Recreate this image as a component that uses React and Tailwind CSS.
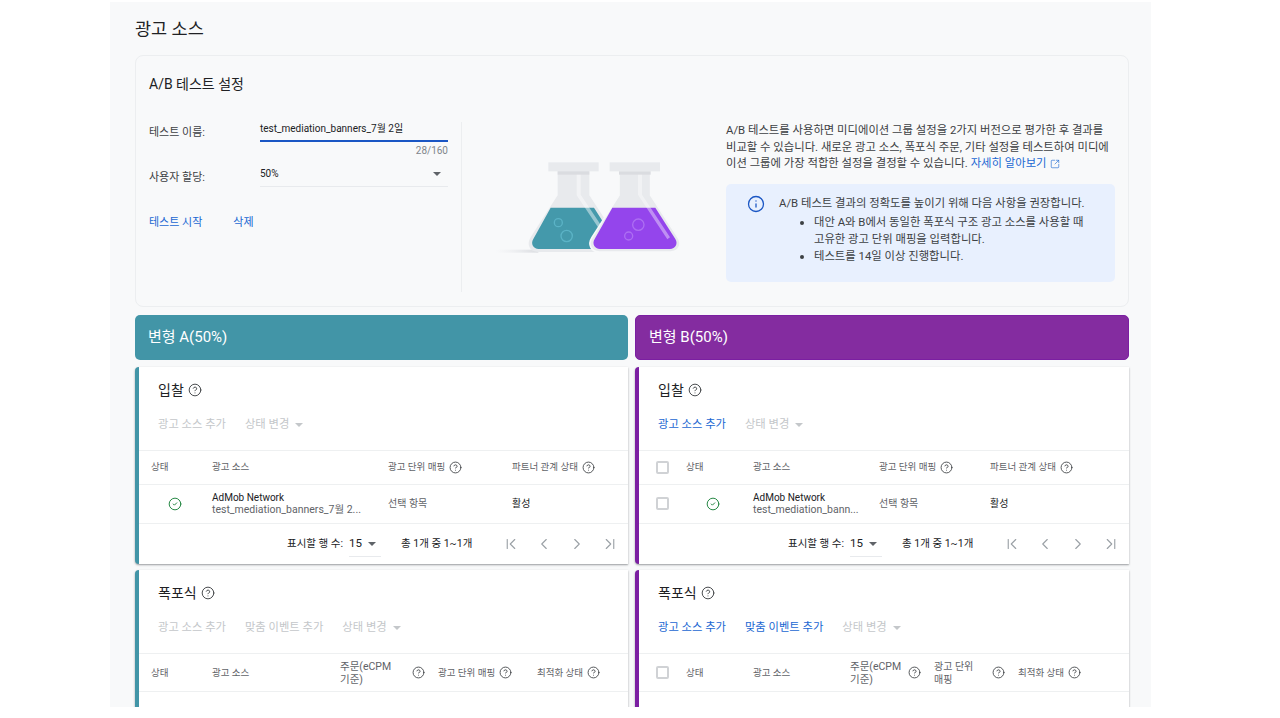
import React from 'react';
import {
  CircleHelp,
  CircleCheck,
  ChevronFirst,
  ChevronLeft,
  ChevronRight,
  ChevronLast,
  Info,
  SquareArrowOutUpRight,
} from 'lucide-react';

const Caret = ({ className = 'text-[#5f6368]' }) => (
  <svg width="8" height="4" viewBox="0 0 8 4" className={className}>
    <path d="M0 0h8L4 4z" fill="currentColor" />
  </svg>
);

const Help = ({ size = 13 }) => <CircleHelp size={size} strokeWidth={1.6} className="shrink-0 text-[#3c4043]" />;

const Checkbox = () => <div className="w-[13px] h-[13px] shrink-0 rounded-[2px] border-2 border-[#d0d2d5] bg-white" />;

const Flasks = () => (
  <svg width="200" height="105" viewBox="90 135 600 315">
    <defs>
      <linearGradient id="floor" x1="0" x2="1" y1="0" y2="0">
        <stop offset="0" stopColor="#e8eaed" stopOpacity="0" />
        <stop offset="1" stopColor="#dadce0" />
      </linearGradient>
    </defs>
    <rect x="105" y="419" width="130" height="9" fill="url(#floor)" />
    {/* teal flask */}
    <path d="M293 184h95v72l82 126c14 22 2 44-22 44H234c-24 0-36-22-22-44l81-126z" fill="#e8eaed" />
    <rect x="265" y="157" width="151" height="27" fill="#e8eaed" />
    <rect x="293" y="184" width="95" height="10" fill="#dadce0" />
    <path d="M272 293h130l60 94c9 14 0 30-16 30H236c-16 0-25-16-16-30z" fill="#4499ab" />
    <circle cx="295" cy="338" r="12" fill="none" stroke="#5bb3c6" strokeWidth="4" />
    <circle cx="320" cy="378" r="17" fill="none" stroke="#5bb3c6" strokeWidth="4" />
    <path d="M350 194h12v60l60 90-8 8-64-96z" fill="#ffffff" fillOpacity="0.45" />
    {/* purple flask */}
    <path d="M477 184h95v72l82 126c14 22 2 44-22 44H418c-24 0-36-22-22-44l81-126z" fill="#e8eaed" stroke="#f8f9fa" strokeWidth="5" />
    <rect x="449" y="157" width="151" height="27" fill="#e8eaed" />
    <rect x="477" y="184" width="95" height="10" fill="#dadce0" />
    <path d="M457 293h129l60 94c9 14 0 30-16 30H420c-16 0-25-16-16-30z" fill="#9445ec" />
    <circle cx="535" cy="344" r="17" fill="none" stroke="#ad6ff2" strokeWidth="4" />
    <circle cx="506" cy="378" r="12" fill="none" stroke="#ad6ff2" strokeWidth="4" />
    <path d="M534 194h12v60l84 128-8 6-88-134z" fill="#ffffff" fillOpacity="0.4" />
  </svg>
);

const Pager = () => (
  <div className="h-[40px] flex items-center justify-end pr-[9px] text-[#202124]">
    <span className="w-[62px] text-[10.5px]">표시할 행 수:</span>
    <div className="relative flex items-center w-[32px] self-stretch">
      <span className="text-[11.5px]">15</span>
      <span className="ml-[6px] flex"><Caret /></span>
      <div className="absolute left-0 right-0 bottom-[7px] h-px bg-[#e8eaed]" />
    </div>
    <span className="ml-[20px] w-[93px] text-[10.5px]">총 1개 중 1~1개</span>
    <div className="flex items-center gap-[15px] text-[#9aa0a6] ml-[8px]">
      <ChevronFirst size={18} strokeWidth={1.5} />
      <ChevronLeft size={18} strokeWidth={1.5} />
      <ChevronRight size={18} strokeWidth={1.5} />
      <ChevronLast size={18} strokeWidth={1.5} />
    </div>
  </div>
);

const Toolbar = ({ enabled, items }) => (
  <div className="flex items-center gap-[19px] h-[20px] mt-[16px] text-[11.3px]">
    {items.map((item) => (
      <span key={item} className={enabled ? 'text-[#1a67d2]' : 'text-[#c4c7ca]'}>{item}</span>
    ))}
    <span className="flex items-center gap-[6px] text-[#c4c7ca]">
      상태 변경
      <Caret className="text-[#c4c7ca]" />
    </span>
  </div>
);

const BidTable = ({ variantB }) => {
  const cols = variantB ? ['w-[67px]', 'w-[126px]', 'w-[111px]'] : ['w-[61px]', 'w-[176px]', 'w-[124px]'];
  return (
    <>
      <div className="h-[35px] flex items-center border-t border-b border-[#eef0f1] text-[9.5px] text-[#5f6368] pl-[12px]">
        {variantB && <div className="w-[35px] pl-[5px]"><Checkbox /></div>}
        <div className={cols[0]}>상태</div>
        <div className={cols[1]}>광고 소스</div>
        <div className={`${cols[2]} flex items-center gap-[4px]`}>광고 단위 매핑 <Help /></div>
        <div className="flex items-center gap-[4px]">파트너 관계 상태 <Help /></div>
      </div>
      <div className="h-[39px] flex items-center border-b border-[#eef0f1] text-[10px] pl-[12px] pb-[1px]">
        {variantB && <div className="w-[35px] pl-[5px]"><Checkbox /></div>}
        <div className={cols[0]}>
          <CircleCheck size={14} strokeWidth={1.6} className={`text-[#188038] ${variantB ? 'ml-[20px]' : 'ml-[17px]'}`} />
        </div>
        <div className={`${cols[1]} leading-[12px]`}>
          <div className="text-[#202124]">AdMob Network</div>
          <div className="text-[#5f6368] text-[10.5px]">{variantB ? 'test_mediation_bann...' : 'test_mediation_banners_7월 2...'}</div>
        </div>
        <div className={`${cols[2]} text-[#5f6368]`}>선택 항목</div>
        <div className="text-[#202124]">활성</div>
      </div>
      <Pager />
    </>
  );
};

const WaterfallHeader = ({ variantB }) => (
  <div className="h-[39px] flex items-center border-t border-b border-[#eef0f1] text-[9.5px] text-[#5f6368] pl-[12px] leading-[13px]">
    {variantB && <div className="w-[35px] pl-[5px]"><Checkbox /></div>}
    <div className={variantB ? 'w-[67px]' : 'w-[61px]'}>상태</div>
    <div className={variantB ? 'w-[97px]' : 'w-[128px]'}>광고 소스</div>
    <div className={`${variantB ? 'w-[84px]' : 'w-[98px]'} flex items-center`}>
      <span className={`${variantB ? 'w-[52px] mr-[6px]' : 'w-[57px] mr-[15px]'} shrink-0 text-[10.5px]`}>주문(eCPM 기준)</span>
      <Help />
    </div>
    {variantB ? (
      <div className="w-[84px] flex items-center">
        <span className="w-[44px] shrink-0 mr-[14px] text-[10px]">광고 단위 매핑</span>
        <Help />
      </div>
    ) : (
      <div className="w-[99px] flex items-center gap-[4px]">광고 단위 매핑 <Help /></div>
    )}
    <div className="flex items-center gap-[4px]">최적화 상태 <Help /></div>
  </div>
);

const SectionCard = ({ title, accent, children, toolbar }) => (
  <div className={`bg-white rounded-l-[4px] border-l-4 ${accent} shadow-[0_1px_2px_rgba(60,64,67,0.5)] overflow-hidden`}>
    <div className="pl-[19px] pt-[14px] h-[83px]">
      <div className="flex items-center gap-[4px] h-[18px] text-[14px] text-[#202124]">
        {title} <Help size={14} />
      </div>
      {toolbar}
    </div>
    {children}
  </div>
);

const VariantColumn = ({ name, variantB }) => {
  const accent = variantB ? 'border-[#7b1fa2]' : 'border-[#4295a7]';
  return (
    <div className="flex flex-col">
      <div className={`h-[45px] flex items-center pl-[13px] rounded-[5px] text-[15px] text-white ${variantB ? 'bg-[#842ca0] border border-[#7b1fa2]' : 'bg-[#4295a7]'}`}>
        {name}
      </div>
      <div className="mt-[7px]">
        <SectionCard title="입찰" accent={accent} toolbar={<Toolbar enabled={variantB} items={['광고 소스 추가']} />}>
          <BidTable variantB={variantB} />
        </SectionCard>
      </div>
      <div className="mt-[6px]">
        <SectionCard title="폭포식" accent={accent} toolbar={<Toolbar enabled={variantB} items={['광고 소스 추가', '맞춤 이벤트 추가']} />}>
          <WaterfallHeader variantB={variantB} />
          <div className="h-[40px]" />
        </SectionCard>
      </div>
    </div>
  );
};

export default function App() {
  return (
    <div className="h-[718px] bg-white overflow-hidden pt-[2px] font-['Roboto','Noto_Sans_CJK_KR',sans-serif]">
      <div className="ml-[110px] w-[1041px] h-[705px] bg-[#f8f9fa] overflow-hidden pl-[25px] pr-[22px] pt-[16px]">
        <h1 className="text-[17.5px] leading-[22px] text-[#202124] h-[22px]">광고 소스</h1>

        <section className="mt-[15px] h-[252px] rounded-[8px] border border-[#eceef0] pt-[18px] px-[13px]">
          <h2 className="text-[14px] leading-[20px] text-[#202124]">A/B 테스트 설정</h2>
          <div className="flex mt-[28px]">
            {/* form */}
            <div className="w-[313px] shrink-0 h-[170px] border-r border-[#eceef0] pr-[12px]">
              <div className="flex">
                <div className="w-[111px] pt-[4px] text-[11px] leading-[14px] text-[#3c4043]">테스트 이름:</div>
                <div className="w-[188px]">
                  <div className="text-[10px] leading-[14px] text-[#202124] pb-[4px] border-b-2 border-[#1a56c4]">test_mediation_banners_7월 2일</div>
                  <div className="text-right text-[10px] leading-[12px] text-[#80868b] mt-[3px]">28/160</div>
                </div>
              </div>
              <div className="flex mt-[10px]">
                <div className="w-[111px] text-[11px] leading-[14px] pt-[4px] text-[#3c4043]">사용자 할당:</div>
                <div className="w-[188px] h-[20px] flex items-start justify-between pr-[7px] border-b border-[#e8eaed] text-[10px] leading-[14px] text-[#202124]">
                  50%
                  <span className="pt-[5px] flex"><Caret /></span>
                </div>
              </div>
              <div className="flex gap-[31px] mt-[29px] text-[11px] leading-[14px] text-[#1a67d2]">
                <span>테스트 시작</span>
                <span>삭제</span>
              </div>
            </div>
            {/* illustration */}
            <div className="w-[264px] shrink-0 pl-[28px] pt-[33px]">
              <Flasks />
            </div>
            {/* description */}
            <div className="w-[389px] shrink-0">
              <p className="text-[11.35px] leading-[16.7px] text-[#3c4043] whitespace-nowrap">
                A/B 테스트를 사용하면 미디에이션 그룹 설정을 2가지 버전으로 평가한 후 결과를<br />
                비교할 수 있습니다. 새로운 광고 소스, 폭포식 주문, 기타 설정을 테스트하여 미디에<br />
                이션 그룹에 가장 적합한 설정을 결정할 수 있습니다.{' '}
                <span className="text-[#1a67d2] inline-flex items-center gap-[3px]">
                  자세히 알아보기 <SquareArrowOutUpRight size={10} strokeWidth={1.5} />
                </span>
              </p>
              <div className="mt-[12px] h-[98px] rounded-[5px] bg-[#e8f0fe] flex pt-[11px] pl-[21px]">
                <Info size={18} strokeWidth={1.7} className="text-[#1a56c4] shrink-0" />
                <div className="ml-[14px] text-[11.35px] leading-[17px] text-[#3c4043] whitespace-nowrap">
                  <div>A/B 테스트 결과의 정확도를 높이기 위해 다음 사항을 권장합니다.</div>
                  <ul className="list-disc pl-[35px] mt-[2px]">
                    <li>대안 A와 B에서 동일한 폭포식 구조 광고 소스를 사용할 때<br />고유한 광고 단위 매핑을 입력합니다.</li>
                    <li>테스트를 14일 이상 진행합니다.</li>
                  </ul>
                </div>
              </div>
            </div>
          </div>
        </section>

        <div className="grid grid-cols-[493px_494px] gap-x-[7px] mt-[8px]">
          <VariantColumn name="변형 A(50%)" />
          <VariantColumn name="변형 B(50%)" variantB />
        </div>
      </div>
    </div>
  );
}
